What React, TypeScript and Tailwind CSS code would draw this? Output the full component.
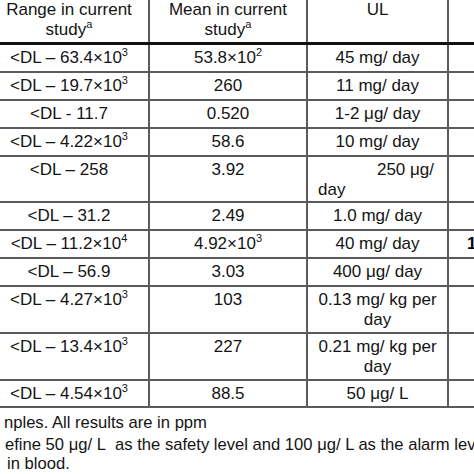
import type { ReactNode } from 'react'

type Row = {
  h: string
  range: ReactNode
  mean: ReactNode
  ul: ReactNode
  extra?: ReactNode
}

function Sup({ children }: { children: ReactNode }) {
  return <sup className="text-[11px] top-[-7px]">{children}</sup>
}

const rows: Row[] = [
  { h: 'h-[28px]', range: <>&lt;DL – 63.4×10<Sup>3</Sup></>, mean: <>53.8×10<Sup>2</Sup></>, ul: '45 mg/ day' },
  { h: 'h-[28px]', range: <>&lt;DL – 19.7×10<Sup>3</Sup></>, mean: '260', ul: '11 mg/ day' },
  { h: 'h-[28px]', range: '<DL - 11.7', mean: '0.520', ul: '1-2 μg/ day' },
  { h: 'h-[28px]', range: <>&lt;DL – 4.22×10<Sup>3</Sup></>, mean: '58.6', ul: '10 mg/ day' },
  {
    h: 'h-[46px]',
    range: '<DL – 258',
    mean: '3.92',
    ul: (
      <>
        <div className="text-right pr-[13px]">250 μg/</div>
        <div className="text-left pl-[10px]">day</div>
      </>
    ),
  },
  { h: 'h-[28px]', range: '<DL – 31.2', mean: '2.49', ul: '1.0 mg/ day' },
  {
    h: 'h-[28px]',
    range: <>&lt;DL – 11.2×10<Sup>4</Sup></>,
    mean: <>4.92×10<Sup>3</Sup></>,
    ul: '40 mg/ day',
    extra: <span className="font-bold text-black">1</span>,
  },
  { h: 'h-[28px]', range: '<DL – 56.9', mean: '3.03', ul: '400 μg/ day' },
  { h: 'h-[47px]', range: <>&lt;DL – 4.27×10<Sup>3</Sup></>, mean: '103', ul: <>0.13 mg/ kg per<br />day</> },
  { h: 'h-[47px]', range: <>&lt;DL – 13.4×10<Sup>3</Sup></>, mean: '227', ul: <>0.21 mg/ kg per<br />day</> },
  { h: 'h-[27px]', range: <>&lt;DL – 4.54×10<Sup>3</Sup></>, mean: '88.5', ul: '50 μg/ L' },
]

export default function App() {
  return (
    <div className="w-[474px] h-[474px] overflow-hidden bg-white text-[#141414] font-['Liberation_Sans',Arial,sans-serif]">
      <div className="ml-[-10px] w-[540px] text-[17px] leading-[20px]">
        {/* header */}
        <div className="flex h-[45px] border-b-[3px] border-[#111]">
          <div className="w-[160px] border-r-2 border-[#5a5a5a] text-center">
            Range in current
            <br />
            study<Sup>a</Sup>
          </div>
          <div className="w-[158px] border-r-2 border-[#5a5a5a] text-center">
            Mean in current
            <br />
            study<Sup>a</Sup>
          </div>
          <div className="w-[141px] border-r-2 border-[#5a5a5a] text-center">UL</div>
          <div className="flex-1" />
        </div>

        {rows.map((r, i) => (
          <div key={i} className={`flex border-b-2 border-[#5a5a5a] ${r.h}`}>
            <div className="w-[160px] border-r-2 border-[#5a5a5a] pt-[3px] text-center whitespace-nowrap">{r.range}</div>
            <div className="w-[158px] border-r-2 border-[#5a5a5a] pt-[3px] text-center whitespace-nowrap">{r.mean}</div>
            <div className="w-[141px] border-r-2 border-[#5a5a5a] pt-[3px] text-center">{r.ul}</div>
            <div className="flex-1 pt-[3px] pl-[18px]">{r.extra}</div>
          </div>
        ))}
      </div>

      {/* footnotes */}
      <div className="text-[16.6px] whitespace-nowrap">
        <p className="mt-[5px] pl-[4px] leading-[20px]">nples. All results are in ppm</p>
        <p className="mt-[2px] pl-[5px] leading-[19px]">
          efine 50 μg/ L&nbsp; as the safety level and 100 μg/ L as the alarm level
          <br />
          <span className="pl-[2px]">in blood.</span>
        </p>
      </div>
    </div>
  )
}
